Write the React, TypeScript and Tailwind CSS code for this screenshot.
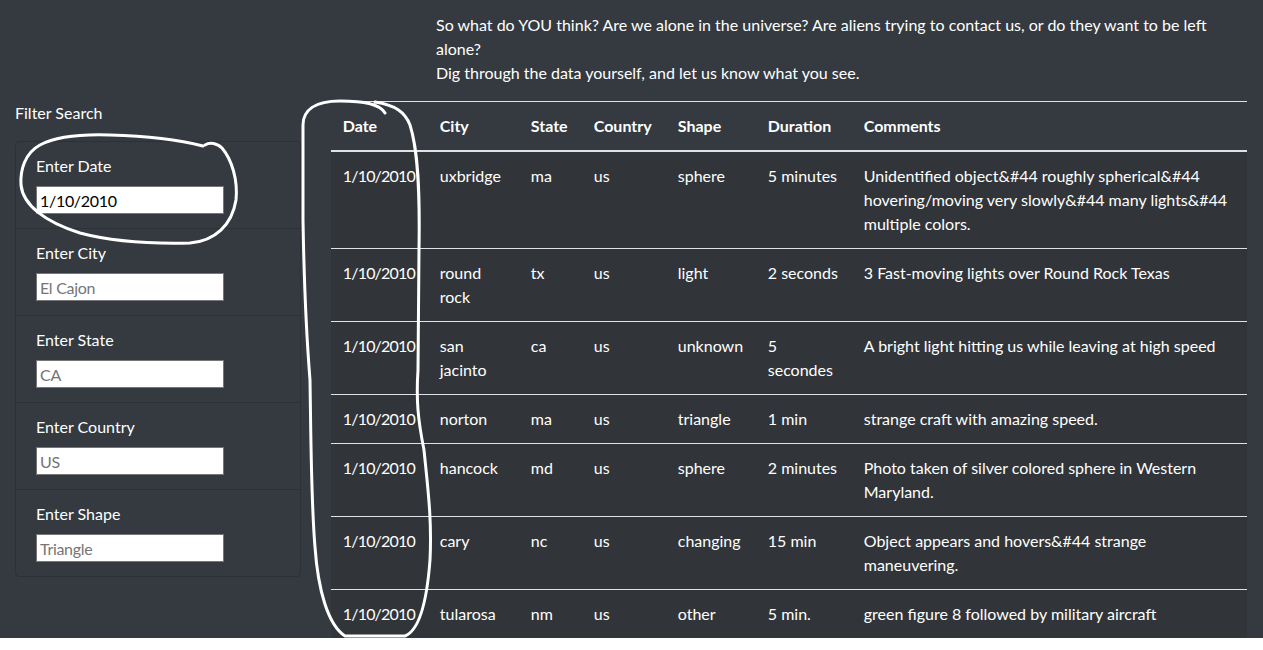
import React from "react";

type Sighting = {
    datetime: string;
    city: string;
    state: string;
    country: string;
    shape: string;
    duration: string;
    comments: string;
};

const sightings: Sighting[] = [
    { datetime: "1/10/2010", city: "uxbridge", state: "ma", country: "us", shape: "sphere", duration: "5 minutes", comments: "Unidentified object&#44 roughly spherical&#44 hovering/moving very slowly&#44 many lights&#44 multiple colors." },
    { datetime: "1/10/2010", city: "round rock", state: "tx", country: "us", shape: "light", duration: "2 seconds", comments: "3 Fast-moving lights over Round Rock Texas" },
    { datetime: "1/10/2010", city: "san jacinto", state: "ca", country: "us", shape: "unknown", duration: "5 secondes", comments: "A bright light hitting us while leaving at high speed" },
    { datetime: "1/10/2010", city: "norton", state: "ma", country: "us", shape: "triangle", duration: "1 min", comments: "strange craft with amazing speed." },
    { datetime: "1/10/2010", city: "hancock", state: "md", country: "us", shape: "sphere", duration: "2 minutes", comments: "Photo taken of silver colored sphere in Western Maryland." },
    { datetime: "1/10/2010", city: "cary", state: "nc", country: "us", shape: "changing", duration: "15 min", comments: "Object appears and hovers&#44 strange maneuvering." },
    { datetime: "1/10/2010", city: "tularosa", state: "nm", country: "us", shape: "other", duration: "5 min.", comments: "green figure 8 followed by military aircraft" },
];

const filters = [
    { id: "datetime", label: "Enter Date", placeholder: "1/10/2010", value: "1/10/2010" },
    { id: "city", label: "Enter City", placeholder: "El Cajon", value: "" },
    { id: "state", label: "Enter State", placeholder: "CA", value: "" },
    { id: "country", label: "Enter Country", placeholder: "US", value: "" },
    { id: "shape", label: "Enter Shape", placeholder: "Triangle", value: "" },
];

function Scribbles() {
    // hand drawn marks over the screenshot
    return (
        <svg className="pointer-events-none absolute left-0 top-0" width="1263" height="640" viewBox="0 0 1263 640" fill="none">
            <path
                d="M203,146 C180,140 150,136 110,135 C80,134 55,137 40,145 C25,153 20,170 21,185 C23,205 45,222 80,233 C110,241 150,244 190,243 C215,241 232,225 236,200 C238,180 232,160 222,148 C217,143 210,142 205,145"
                stroke="white" strokeWidth="3" strokeLinecap="round" strokeLinejoin="round"
            />
            <path
                d="M385,113 C380,104 365,101 340,101 C315,101 303,110 303,125 L303,220 C304,280 306,330 310,380 C311,440 311,500 315,547 C318,590 328,625 345,636 L405,636 C420,630 427,600 430,560 C432,520 428,490 424,450 C418,420 416,400 418,370 L419,250 C420,190 418,150 410,125 C405,112 395,105 375,102"
                stroke="white" strokeWidth="3" strokeLinecap="round" strokeLinejoin="round"
            />
        </svg>
    );
}

export default function App() {
    return (
        <div className="bg-white font-['Lato','Liberation_Sans',sans-serif] text-base leading-6 text-white">
            <div className="relative bg-[#343a40]">
                <div className="grid grid-cols-12 pt-[13px]">
                    <div className="col-span-8 col-start-5 px-[15px]">
                        <p className="mb-4">
                            So what do YOU think? Are we alone in the universe? Are aliens trying to contact us, or do they want to be left alone?
                            <br />
                            Dig through the data yourself, and let us know what you see.
                        </p>
                    </div>
                </div>
                <div className="grid grid-cols-12">
                    <div className="col-span-3 px-[15px]">
                        <div className="mb-4">Filter Search</div>
                        <ul className="rounded border border-[#2c3136]">
                            {filters.map((f, i) => (
                                <li key={f.id} className={i > 0 ? "border-t border-[#2c3136] px-5 pb-[14px] pt-3" : "px-5 pb-[14px] pt-3"}>
                                    <label htmlFor={f.id} className="mb-2 block">{f.label}</label>
                                    <input
                                        id={f.id}
                                        type="text"
                                        defaultValue={f.value}
                                        placeholder={f.placeholder}
                                        className="block h-[28px] w-[188px] border border-[#767676] bg-white px-[3px] tracking-[-0.3px] text-black placeholder:text-[#757575]"
                                    />
                                </li>
                            ))}
                        </ul>
                    </div>
                    <div className="col-span-9 px-[15px]">
                        <table className="w-[916px] table-fixed text-left">
                            <colgroup>
                                <col className="w-[97px]" />
                                <col className="w-[91px]" />
                                <col className="w-[63px]" />
                                <col className="w-[84px]" />
                                <col className="w-[90px]" />
                                <col className="w-[96px]" />
                                <col />
                            </colgroup>
                            <thead>
                                <tr>
                                    {["Date", "City", "State", "Country", "Shape", "Duration", "Comments"].map((h) => (
                                        <th key={h} className="border-t border-b-2 border-t-[#dee2e6] border-b-[#dee2e6] p-3 align-bottom font-bold">{h}</th>
                                    ))}
                                </tr>
                            </thead>
                            <tbody className="bg-[#313539]">
                                {sightings.map((s, i) => (
                                    <tr key={i}>
                                        <td className="whitespace-nowrap border-t border-[#dee2e6] p-3 align-top tracking-[-0.8px]">{s.datetime}</td>
                                        <td className="border-t border-[#dee2e6] p-3 align-top">{s.city}</td>
                                        <td className="border-t border-[#dee2e6] p-3 align-top">{s.state}</td>
                                        <td className="border-t border-[#dee2e6] p-3 align-top">{s.country}</td>
                                        <td className="border-t border-[#dee2e6] p-3 align-top">{s.shape}</td>
                                        <td className="border-t border-[#dee2e6] p-3 align-top">{s.duration}</td>
                                        <td className="border-t border-[#dee2e6] p-3 align-top">{s.comments}</td>
                                    </tr>
                                ))}
                            </tbody>
                        </table>
                    </div>
                </div>
                <Scribbles />
            </div>
        </div>
    );
}
